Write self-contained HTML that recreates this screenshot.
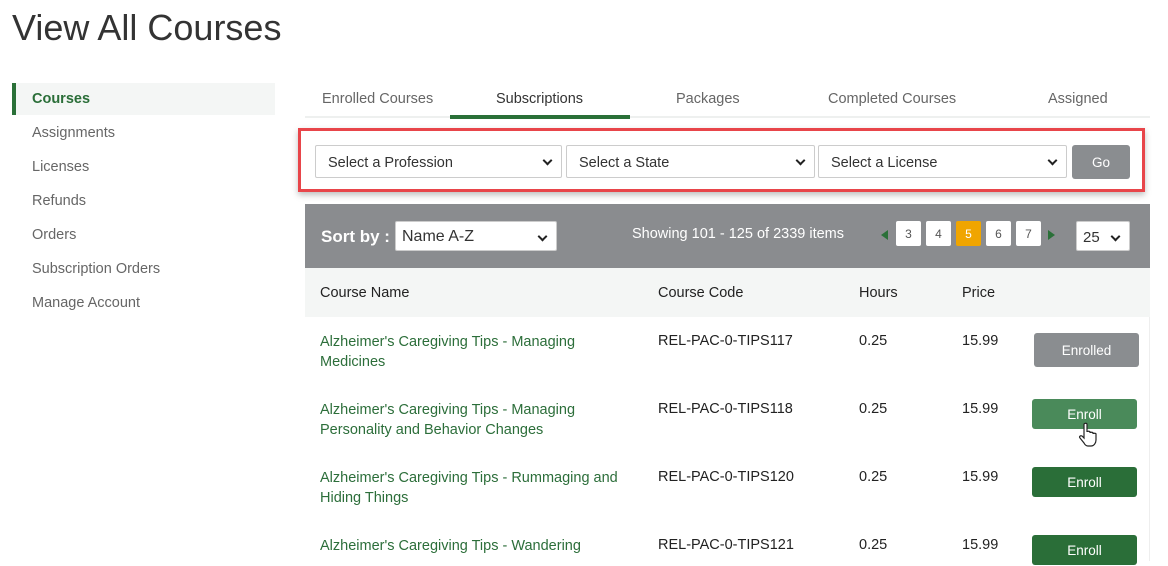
<!DOCTYPE html>
<html><head><meta charset="utf-8"><style>
*{box-sizing:border-box;margin:0;padding:0}
body{width:1168px;height:561px;overflow:hidden;background:#fff;font-family:"Liberation Sans",sans-serif;color:#333;position:relative}
.a{position:absolute;white-space:nowrap}
h1{position:absolute;left:12px;top:7px;font-size:36px;font-weight:normal;color:#333;letter-spacing:0}
.side{font-size:14.5px;color:#666}
.sel{position:absolute;top:145px;height:33px;border:1px solid #ccc;border-radius:2px;background:#fff;font-size:14.5px;color:#333;padding:9px 12px}
.sel:after{content:"";position:absolute;right:10px;top:11px;width:5px;height:5px;border-right:2px solid #222;border-bottom:2px solid #222;transform:rotate(45deg)}
.pg{position:absolute;top:221px;width:25px;height:25px;background:#fff;border-radius:2px;font-size:12px;text-align:center;line-height:26px;color:#555}
.tri{position:absolute;top:230px;width:0;height:0;border-top:5px solid transparent;border-bottom:5px solid transparent}
.cell{font-size:14.5px;color:#222}
.lnk{font-size:14.5px;color:#2c6e3a;line-height:20px}
.btn{position:absolute;border-radius:3px;color:#fff;font-size:13.5px;text-align:center}
</style></head><body>
<h1>View All Courses</h1>
<div class="a" style="left:12px;top:83px;width:263px;height:32px;background:#f4f6f5;border-left:4px solid #2a7038"></div>
<div class="a side" style="left:32px;top:91px;color:#2a6e38;font-weight:bold">Courses</div>
<div class="a side" style="left:32px;top:125px">Assignments</div>
<div class="a side" style="left:32px;top:159px">Licenses</div>
<div class="a side" style="left:32px;top:193px">Refunds</div>
<div class="a side" style="left:32px;top:227px">Orders</div>
<div class="a side" style="left:32px;top:261px">Subscription Orders</div>
<div class="a side" style="left:32px;top:295px">Manage Account</div>

<div class="a" style="left:305px;top:116px;width:845px;height:2px;background:#eef0ef"></div>
<div class="a" style="left:450px;top:115px;width:180px;height:4px;background:#2a7038"></div>
<div class="a side" style="left:322px;top:91px">Enrolled Courses</div>
<div class="a side" style="left:496px;top:91px;color:#333">Subscriptions</div>
<div class="a side" style="left:676px;top:91px">Packages</div>
<div class="a side" style="left:828px;top:91px">Completed Courses</div>
<div class="a side" style="left:1048px;top:91px">Assigned</div>

<div class="a" style="left:298px;top:128px;width:847px;height:64px;border:3px solid #e8454a;box-shadow:0 3px 6px rgba(0,0,0,.25)"></div>
<div class="sel" style="left:315px;width:247px">Select a Profession</div>
<div class="sel" style="left:566px;width:249px">Select a State</div>
<div class="sel" style="left:818px;width:249px">Select a License</div>
<div class="a" style="left:1072px;top:145px;width:58px;height:34px;background:#8a8d90;border-radius:3px;color:#fff;font-size:13.5px;text-align:center;line-height:36px">Go</div>

<div class="a" style="left:305px;top:204px;width:845px;height:64px;background:#8a8c8f"></div>
<div class="a" style="left:321px;top:227px;color:#fff;font-size:17px;font-weight:bold">Sort by :</div>
<div class="sel" style="left:395px;top:221px;width:162px;height:30px;font-size:16px;padding:6px 6px;border-radius:2px">Name A-Z</div>
<div class="a" style="left:632px;top:226px;color:#fff;font-size:14.5px">Showing 101 - 125 of 2339 items</div>
<div class="tri" style="left:881px;border-right:7px solid #2a7038"></div>
<div class="pg" style="left:896px">3</div>
<div class="pg" style="left:926px">4</div>
<div class="pg" style="left:956px;background:#f0a500;color:#fff">5</div>
<div class="pg" style="left:986px">6</div>
<div class="pg" style="left:1016px">7</div>
<div class="tri" style="left:1048px;border-left:7px solid #2a7038"></div>
<div class="sel" style="left:1076px;top:221px;width:54px;height:30px;font-size:15px;padding:7px 6px">25</div>

<div class="a" style="left:305px;top:268px;width:845px;height:49px;background:#f4f6f5"></div>
<div class="a cell" style="left:320px;top:285px">Course Name</div>
<div class="a cell" style="left:658px;top:285px">Course Code</div>
<div class="a cell" style="left:859px;top:285px">Hours</div>
<div class="a cell" style="left:962px;top:285px">Price</div>
<div class="a" style="left:305px;top:317px;width:845px;height:244px;border-right:1px solid #eee"></div>

<div class="a lnk" style="left:320px;top:332px">Alzheimer's Caregiving Tips - Managing<br>Medicines</div>
<div class="a cell" style="left:658px;top:333px">REL-PAC-0-TIPS117</div>
<div class="a cell" style="left:859px;top:333px">0.25</div>
<div class="a cell" style="left:962px;top:333px">15.99</div>
<div class="btn" style="left:1034px;top:333px;width:105px;height:34px;line-height:35px;background:#8a8d90">Enrolled</div>

<div class="a lnk" style="left:320px;top:400px">Alzheimer's Caregiving Tips - Managing<br>Personality and Behavior Changes</div>
<div class="a cell" style="left:658px;top:401px">REL-PAC-0-TIPS118</div>
<div class="a cell" style="left:859px;top:401px">0.25</div>
<div class="a cell" style="left:962px;top:401px">15.99</div>
<div class="btn" style="left:1032px;top:399px;width:105px;height:30px;line-height:31px;background:#4a8a5a">Enroll</div>

<div class="a lnk" style="left:320px;top:468px">Alzheimer's Caregiving Tips - Rummaging and<br>Hiding Things</div>
<div class="a cell" style="left:658px;top:469px">REL-PAC-0-TIPS120</div>
<div class="a cell" style="left:859px;top:469px">0.25</div>
<div class="a cell" style="left:962px;top:469px">15.99</div>
<div class="btn" style="left:1032px;top:467px;width:105px;height:30px;line-height:31px;background:#2a6e38">Enroll</div>

<div class="a lnk" style="left:320px;top:536px">Alzheimer's Caregiving Tips - Wandering</div>
<div class="a cell" style="left:658px;top:537px">REL-PAC-0-TIPS121</div>
<div class="a cell" style="left:859px;top:537px">0.25</div>
<div class="a cell" style="left:962px;top:537px">15.99</div>
<div class="btn" style="left:1032px;top:535px;width:105px;height:30px;line-height:31px;background:#2a6e38">Enroll</div>

<svg class="a" style="left:1078px;top:422px" width="22" height="26" viewBox="0 0 22 26"><path d="M6 2c1-1 2.5-1 3 0v8c0-1 3-1 3 0v1c0-1 3-1 3 0v1c0-1 3-1 3 0v6c0 3-2 6-5 6h-3c-2 0-3-1-4-3l-4-5c-1-1 0-3 2-2l2 2z" fill="#fff" stroke="#222" stroke-width="1.2"/></svg>
</body></html>
